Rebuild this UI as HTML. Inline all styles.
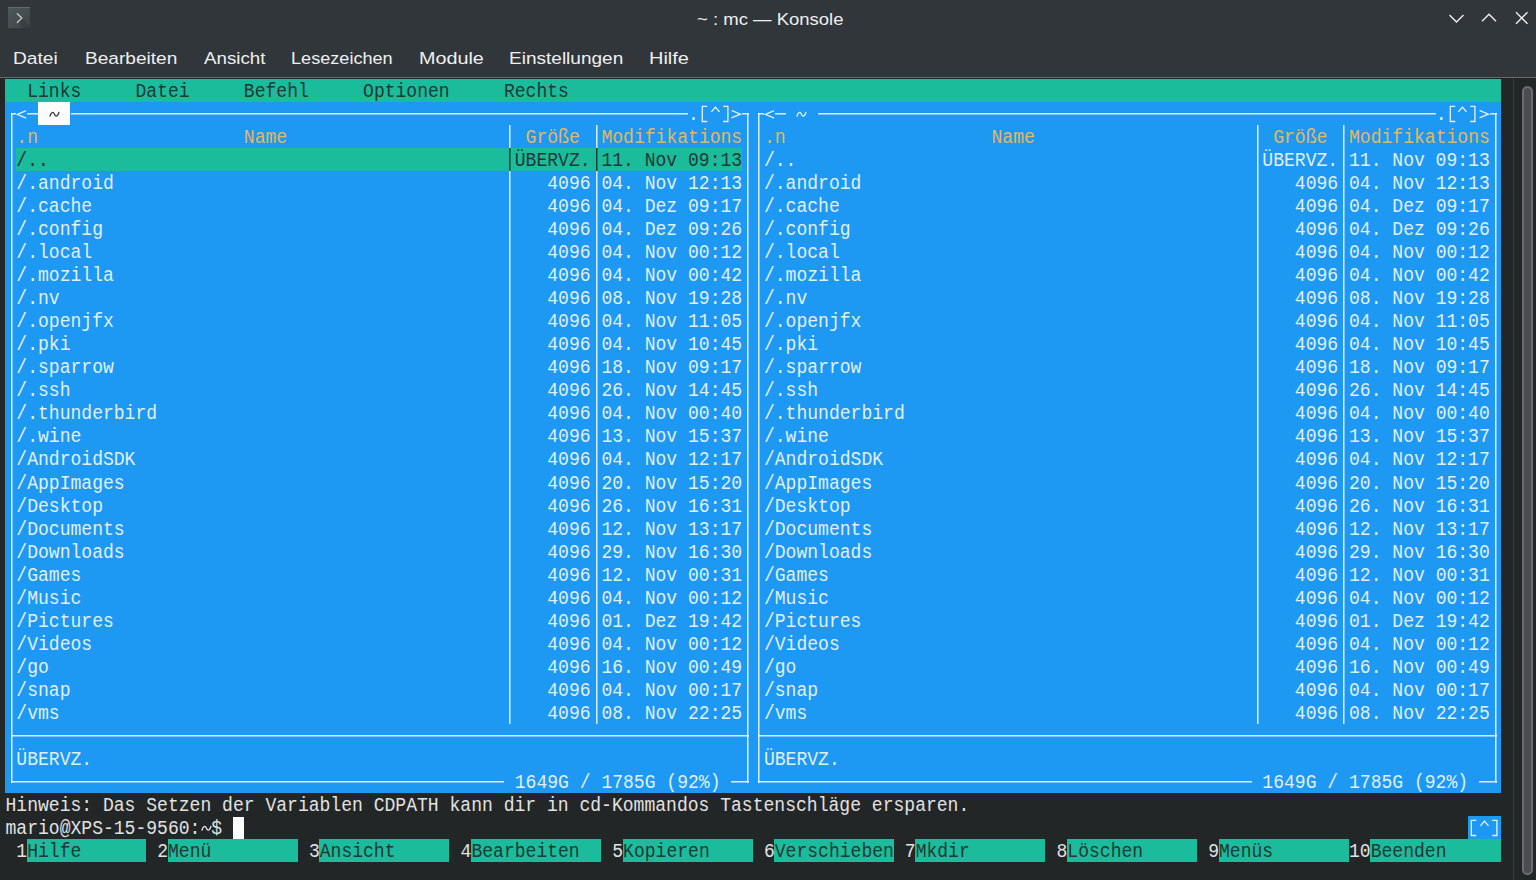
<!DOCTYPE html>
<html><head><meta charset="utf-8"><title>mc — Konsole</title>
<style>
html,body{margin:0;padding:0;width:1536px;height:880px;overflow:hidden;background:#232627;}
.win{position:absolute;left:0;top:0;width:1536px;height:880px;background:#31363b;overflow:hidden}
.title{position:absolute;left:0;top:0;width:1536px;height:38px;background:#31363b}
.ttl{position:absolute;left:696.5px;top:11px;transform:scaleX(1.156);transform-origin:0 0;font:16px "Liberation Sans",sans-serif;color:#eff0f1;white-space:pre}
.menu{position:absolute;top:48.3px;transform-origin:0 16px;font:18px "Liberation Sans",sans-serif;color:#eff0f1;white-space:pre}
.sep{position:absolute;left:0;top:77px;width:1536px;height:1px;background:#66696c}
.term{position:absolute;left:0;top:78px;width:1536px;height:802px;background:#232627}
.b{position:absolute}
.t{position:absolute;font-family:"Liberation Mono",monospace;font-size:18.06px;letter-spacing:-0.001px;line-height:23.03px;height:23.03px;white-space:pre;transform:scaleY(1.08);transform-origin:0 70%;opacity:.88}
.sb{position:absolute;left:1513px;top:78px;width:1px;height:802px;background:#3a3e42}
.handle{position:absolute;left:1522px;top:86px;width:7px;height:785px;border:2px solid #6a6d6f;border-radius:6px;background:#4a4c4e}
</style></head><body>
<div class="win">
<div class="title"></div>
<svg style="position:absolute;left:8px;top:7px" width="23" height="23">
<defs><linearGradient id="ig" x1="0" y1="0" x2="1" y2="1"><stop offset="0" stop-color="#4e5759"/><stop offset="1" stop-color="#3c4346"/></linearGradient></defs>
<rect x="0" y="0" width="22" height="22" fill="url(#ig)"/>
<polygon points="13.8,11.1 9.3,15.5 15.5,22 22,22 22,19.3" fill="rgba(20,24,26,0.16)"/>
<rect x="0" y="0" width="22" height="1" fill="#626a6c"/>
<rect x="0" y="21.5" width="22" height="1" fill="#2a2e31"/>
<path d="M9.3 6.7 L13.8 11.1 L9.3 15.5" stroke="#c9cccd" stroke-width="1.3" fill="none" stroke-linecap="round"/>
</svg>
<div class="ttl">~ : mc — Konsole</div>
<svg style="position:absolute;left:1440px;top:8px" width="96" height="24">
<path d="M9.5 7 L16.5 14 L23.5 7" stroke="#eff0f1" stroke-width="1.4" fill="none"/>
<path d="M42 13.2 L49 6.2 L56 13.2" stroke="#eff0f1" stroke-width="1.4" fill="none"/>
<path d="M76 4.2 L87.5 15.7 M87.5 4.2 L76 15.7" stroke="#eff0f1" stroke-width="1.4" fill="none"/>
</svg>
<div class="menu" style="left:13.27px;transform:scale(1.0641,0.96)">Datei</div>
<div class="menu" style="left:84.88px;transform:scale(1.0595,0.96)">Bearbeiten</div>
<div class="menu" style="left:203.71px;transform:scale(1.0422,0.96)">Ansicht</div>
<div class="menu" style="left:291.39px;transform:scale(1.0061,0.96)">Lesezeichen</div>
<div class="menu" style="left:418.60px;transform:scale(1.0982,0.96)">Module</div>
<div class="menu" style="left:509.29px;transform:scale(1.0571,0.96)">Einstellungen</div>
<div class="menu" style="left:649.08px;transform:scale(1.1091,0.96)">Hilfe</div>
<div class="sep"></div>
<div class="term"></div>
<div class="b" style="left:5px;top:79px;width:1496px;height:23px;background:#1abc9c"></div>
<div class="b" style="left:5px;top:102px;width:33px;height:23px;background:#1d99f3"></div>
<div class="b" style="left:38px;top:102px;width:32px;height:23px;background:#fcfcfc"></div>
<div class="b" style="left:70px;top:102px;width:1431px;height:23px;background:#1d99f3"></div>
<div class="b" style="left:5px;top:125px;width:1496px;height:23px;background:#1d99f3"></div>
<div class="b" style="left:5px;top:148px;width:11px;height:23px;background:#1d99f3"></div>
<div class="b" style="left:16px;top:148px;width:726px;height:23px;background:#1abc9c"></div>
<div class="b" style="left:742px;top:148px;width:759px;height:23px;background:#1d99f3"></div>
<div class="b" style="left:5px;top:171px;width:1496px;height:23px;background:#1d99f3"></div>
<div class="b" style="left:5px;top:194px;width:1496px;height:23px;background:#1d99f3"></div>
<div class="b" style="left:5px;top:217px;width:1496px;height:23px;background:#1d99f3"></div>
<div class="b" style="left:5px;top:240px;width:1496px;height:23px;background:#1d99f3"></div>
<div class="b" style="left:5px;top:263px;width:1496px;height:23px;background:#1d99f3"></div>
<div class="b" style="left:5px;top:286px;width:1496px;height:24px;background:#1d99f3"></div>
<div class="b" style="left:5px;top:310px;width:1496px;height:23px;background:#1d99f3"></div>
<div class="b" style="left:5px;top:333px;width:1496px;height:23px;background:#1d99f3"></div>
<div class="b" style="left:5px;top:356px;width:1496px;height:23px;background:#1d99f3"></div>
<div class="b" style="left:5px;top:379px;width:1496px;height:23px;background:#1d99f3"></div>
<div class="b" style="left:5px;top:402px;width:1496px;height:23px;background:#1d99f3"></div>
<div class="b" style="left:5px;top:425px;width:1496px;height:23px;background:#1d99f3"></div>
<div class="b" style="left:5px;top:448px;width:1496px;height:23px;background:#1d99f3"></div>
<div class="b" style="left:5px;top:471px;width:1496px;height:23px;background:#1d99f3"></div>
<div class="b" style="left:5px;top:494px;width:1496px;height:23px;background:#1d99f3"></div>
<div class="b" style="left:5px;top:517px;width:1496px;height:23px;background:#1d99f3"></div>
<div class="b" style="left:5px;top:540px;width:1496px;height:23px;background:#1d99f3"></div>
<div class="b" style="left:5px;top:563px;width:1496px;height:23px;background:#1d99f3"></div>
<div class="b" style="left:5px;top:586px;width:1496px;height:23px;background:#1d99f3"></div>
<div class="b" style="left:5px;top:609px;width:1496px;height:23px;background:#1d99f3"></div>
<div class="b" style="left:5px;top:632px;width:1496px;height:23px;background:#1d99f3"></div>
<div class="b" style="left:5px;top:655px;width:1496px;height:23px;background:#1d99f3"></div>
<div class="b" style="left:5px;top:678px;width:1496px;height:23px;background:#1d99f3"></div>
<div class="b" style="left:5px;top:701px;width:1496px;height:23px;background:#1d99f3"></div>
<div class="b" style="left:5px;top:724px;width:1496px;height:23px;background:#1d99f3"></div>
<div class="b" style="left:5px;top:747px;width:1496px;height:23px;background:#1d99f3"></div>
<div class="b" style="left:5px;top:770px;width:1496px;height:23px;background:#1d99f3"></div>
<div class="b" style="left:1468px;top:816px;width:33px;height:23px;background:#1d99f3"></div>
<div class="b" style="left:27px;top:839px;width:119px;height:23px;background:#1abc9c"></div>
<div class="b" style="left:168px;top:839px;width:130px;height:23px;background:#1abc9c"></div>
<div class="b" style="left:319px;top:839px;width:130px;height:23px;background:#1abc9c"></div>
<div class="b" style="left:471px;top:839px;width:130px;height:23px;background:#1abc9c"></div>
<div class="b" style="left:623px;top:839px;width:130px;height:23px;background:#1abc9c"></div>
<div class="b" style="left:774px;top:839px;width:120px;height:23px;background:#1abc9c"></div>
<div class="b" style="left:915px;top:839px;width:130px;height:23px;background:#1abc9c"></div>
<div class="b" style="left:1067px;top:839px;width:130px;height:23px;background:#1abc9c"></div>
<div class="b" style="left:1219px;top:839px;width:130px;height:23px;background:#1abc9c"></div>
<div class="b" style="left:1370px;top:839px;width:131px;height:23px;background:#1abc9c"></div>
<span class="t" style="left:27.17px;top:81.00px;color:#232627">Links</span>
<span class="t" style="left:135.52px;top:81.00px;color:#232627">Datei</span>
<span class="t" style="left:243.87px;top:81.00px;color:#232627">Befehl</span>
<span class="t" style="left:363.06px;top:81.00px;color:#232627">Optionen</span>
<span class="t" style="left:503.91px;top:81.00px;color:#232627">Rechts</span>
<svg class="b" style="left:16.34px;top:102.03px" width="11" height="18"><path d="M9.6 8.9 L1.2 12.4 L9.6 15.9" stroke="#fcfcfc" stroke-width="1.3" fill="none" stroke-linecap="round" opacity=".9"/></svg>
<span class="t" style="left:16.34px;top:104.03px;color:#fcfcfc"> </span>
<svg class="b" style="left:48.84px;top:102.03px" width="11" height="18"><path d="M1 14.1 C2.1 9.9 4.2 9.4 5.45 12.3 C6.7 15.2 8.8 14.7 9.9 10.5" stroke="#232627" stroke-width="1.3" fill="none" stroke-linecap="round" opacity=".9"/></svg>
<span class="t" style="left:48.84px;top:104.03px;color:#232627"> </span>
<svg class="b" style="left:698.94px;top:102.03px" width="11" height="23"><path d="M8.2 4.3 H3.3 V19.5 H8.2" stroke="#fcfcfc" stroke-width="1.3" fill="none" opacity=".9"/></svg>
<svg class="b" style="left:709.78px;top:102.03px" width="11" height="14"><path d="M1.4 9.8 L5.45 5.2 L9.5 9.8" stroke="#fcfcfc" stroke-width="1.25" fill="none"/></svg>
<svg class="b" style="left:720.61px;top:102.03px" width="11" height="23"><path d="M2.2 4.3 H6.9 V19.5 H2.2" stroke="#fcfcfc" stroke-width="1.3" fill="none" opacity=".9"/></svg>
<svg class="b" style="left:731.45px;top:102.03px" width="11" height="18"><path d="M1 8.7 L9.4 12.2 L1 15.7" stroke="#fcfcfc" stroke-width="1.3" fill="none" stroke-linecap="round" opacity=".9"/></svg>
<span class="t" style="left:688.11px;top:104.03px;color:#fcfcfc">.    </span>
<svg class="b" style="left:763.95px;top:102.03px" width="11" height="18"><path d="M9.6 8.9 L1.2 12.4 L9.6 15.9" stroke="#fcfcfc" stroke-width="1.3" fill="none" stroke-linecap="round" opacity=".9"/></svg>
<span class="t" style="left:763.95px;top:104.03px;color:#fcfcfc"> </span>
<svg class="b" style="left:796.46px;top:102.03px" width="11" height="18"><path d="M1 14.1 C2.1 9.9 4.2 9.4 5.45 12.3 C6.7 15.2 8.8 14.7 9.9 10.5" stroke="#fcfcfc" stroke-width="1.3" fill="none" stroke-linecap="round" opacity=".9"/></svg>
<span class="t" style="left:796.46px;top:104.03px;color:#fcfcfc"> </span>
<svg class="b" style="left:1446.56px;top:102.03px" width="11" height="23"><path d="M8.2 4.3 H3.3 V19.5 H8.2" stroke="#fcfcfc" stroke-width="1.3" fill="none" opacity=".9"/></svg>
<svg class="b" style="left:1457.39px;top:102.03px" width="11" height="14"><path d="M1.4 9.8 L5.45 5.2 L9.5 9.8" stroke="#fcfcfc" stroke-width="1.25" fill="none"/></svg>
<svg class="b" style="left:1468.23px;top:102.03px" width="11" height="23"><path d="M2.2 4.3 H6.9 V19.5 H2.2" stroke="#fcfcfc" stroke-width="1.3" fill="none" opacity=".9"/></svg>
<svg class="b" style="left:1479.06px;top:102.03px" width="11" height="18"><path d="M1 8.7 L9.4 12.2 L1 15.7" stroke="#fcfcfc" stroke-width="1.3" fill="none" stroke-linecap="round" opacity=".9"/></svg>
<span class="t" style="left:1435.72px;top:104.03px;color:#fcfcfc">.    </span>
<span class="t" style="left:16.34px;top:127.06px;color:#fdbc4b">.n</span>
<span class="t" style="left:243.87px;top:127.06px;color:#fdbc4b">Name</span>
<span class="t" style="left:525.58px;top:127.06px;color:#fdbc4b">Größe</span>
<span class="t" style="left:601.43px;top:127.06px;color:#fdbc4b">Modifikations</span>
<span class="t" style="left:763.95px;top:127.06px;color:#fdbc4b">.n</span>
<span class="t" style="left:991.49px;top:127.06px;color:#fdbc4b">Name</span>
<span class="t" style="left:1273.20px;top:127.06px;color:#fdbc4b">Größe</span>
<span class="t" style="left:1349.04px;top:127.06px;color:#fdbc4b">Modifikations</span>
<span class="t" style="left:16.34px;top:150.09px;color:#232627">/..</span>
<span class="t" style="left:514.75px;top:150.09px;color:#232627">ÜBERVZ. 11. Nov 09:13</span>
<span class="t" style="left:763.95px;top:150.09px;color:#fcfcfc">/..</span>
<span class="t" style="left:1262.36px;top:150.09px;color:#fcfcfc">ÜBERVZ. 11. Nov 09:13</span>
<span class="t" style="left:16.34px;top:173.12px;color:#fcfcfc">/.android</span>
<span class="t" style="left:547.25px;top:173.12px;color:#fcfcfc">4096 04. Nov 12:13</span>
<span class="t" style="left:763.95px;top:173.12px;color:#fcfcfc">/.android</span>
<span class="t" style="left:1294.87px;top:173.12px;color:#fcfcfc">4096 04. Nov 12:13</span>
<span class="t" style="left:16.34px;top:196.15px;color:#fcfcfc">/.cache</span>
<span class="t" style="left:547.25px;top:196.15px;color:#fcfcfc">4096 04. Dez 09:17</span>
<span class="t" style="left:763.95px;top:196.15px;color:#fcfcfc">/.cache</span>
<span class="t" style="left:1294.87px;top:196.15px;color:#fcfcfc">4096 04. Dez 09:17</span>
<span class="t" style="left:16.34px;top:219.18px;color:#fcfcfc">/.config</span>
<span class="t" style="left:547.25px;top:219.18px;color:#fcfcfc">4096 04. Dez 09:26</span>
<span class="t" style="left:763.95px;top:219.18px;color:#fcfcfc">/.config</span>
<span class="t" style="left:1294.87px;top:219.18px;color:#fcfcfc">4096 04. Dez 09:26</span>
<span class="t" style="left:16.34px;top:242.21px;color:#fcfcfc">/.local</span>
<span class="t" style="left:547.25px;top:242.21px;color:#fcfcfc">4096 04. Nov 00:12</span>
<span class="t" style="left:763.95px;top:242.21px;color:#fcfcfc">/.local</span>
<span class="t" style="left:1294.87px;top:242.21px;color:#fcfcfc">4096 04. Nov 00:12</span>
<span class="t" style="left:16.34px;top:265.24px;color:#fcfcfc">/.mozilla</span>
<span class="t" style="left:547.25px;top:265.24px;color:#fcfcfc">4096 04. Nov 00:42</span>
<span class="t" style="left:763.95px;top:265.24px;color:#fcfcfc">/.mozilla</span>
<span class="t" style="left:1294.87px;top:265.24px;color:#fcfcfc">4096 04. Nov 00:42</span>
<span class="t" style="left:16.34px;top:288.27px;color:#fcfcfc">/.nv</span>
<span class="t" style="left:547.25px;top:288.27px;color:#fcfcfc">4096 08. Nov 19:28</span>
<span class="t" style="left:763.95px;top:288.27px;color:#fcfcfc">/.nv</span>
<span class="t" style="left:1294.87px;top:288.27px;color:#fcfcfc">4096 08. Nov 19:28</span>
<span class="t" style="left:16.34px;top:311.30px;color:#fcfcfc">/.openjfx</span>
<span class="t" style="left:547.25px;top:311.30px;color:#fcfcfc">4096 04. Nov 11:05</span>
<span class="t" style="left:763.95px;top:311.30px;color:#fcfcfc">/.openjfx</span>
<span class="t" style="left:1294.87px;top:311.30px;color:#fcfcfc">4096 04. Nov 11:05</span>
<span class="t" style="left:16.34px;top:334.33px;color:#fcfcfc">/.pki</span>
<span class="t" style="left:547.25px;top:334.33px;color:#fcfcfc">4096 04. Nov 10:45</span>
<span class="t" style="left:763.95px;top:334.33px;color:#fcfcfc">/.pki</span>
<span class="t" style="left:1294.87px;top:334.33px;color:#fcfcfc">4096 04. Nov 10:45</span>
<span class="t" style="left:16.34px;top:357.36px;color:#fcfcfc">/.sparrow</span>
<span class="t" style="left:547.25px;top:357.36px;color:#fcfcfc">4096 18. Nov 09:17</span>
<span class="t" style="left:763.95px;top:357.36px;color:#fcfcfc">/.sparrow</span>
<span class="t" style="left:1294.87px;top:357.36px;color:#fcfcfc">4096 18. Nov 09:17</span>
<span class="t" style="left:16.34px;top:380.39px;color:#fcfcfc">/.ssh</span>
<span class="t" style="left:547.25px;top:380.39px;color:#fcfcfc">4096 26. Nov 14:45</span>
<span class="t" style="left:763.95px;top:380.39px;color:#fcfcfc">/.ssh</span>
<span class="t" style="left:1294.87px;top:380.39px;color:#fcfcfc">4096 26. Nov 14:45</span>
<span class="t" style="left:16.34px;top:403.42px;color:#fcfcfc">/.thunderbird</span>
<span class="t" style="left:547.25px;top:403.42px;color:#fcfcfc">4096 04. Nov 00:40</span>
<span class="t" style="left:763.95px;top:403.42px;color:#fcfcfc">/.thunderbird</span>
<span class="t" style="left:1294.87px;top:403.42px;color:#fcfcfc">4096 04. Nov 00:40</span>
<span class="t" style="left:16.34px;top:426.45px;color:#fcfcfc">/.wine</span>
<span class="t" style="left:547.25px;top:426.45px;color:#fcfcfc">4096 13. Nov 15:37</span>
<span class="t" style="left:763.95px;top:426.45px;color:#fcfcfc">/.wine</span>
<span class="t" style="left:1294.87px;top:426.45px;color:#fcfcfc">4096 13. Nov 15:37</span>
<span class="t" style="left:16.34px;top:449.48px;color:#fcfcfc">/AndroidSDK</span>
<span class="t" style="left:547.25px;top:449.48px;color:#fcfcfc">4096 04. Nov 12:17</span>
<span class="t" style="left:763.95px;top:449.48px;color:#fcfcfc">/AndroidSDK</span>
<span class="t" style="left:1294.87px;top:449.48px;color:#fcfcfc">4096 04. Nov 12:17</span>
<span class="t" style="left:16.34px;top:472.51px;color:#fcfcfc">/AppImages</span>
<span class="t" style="left:547.25px;top:472.51px;color:#fcfcfc">4096 20. Nov 15:20</span>
<span class="t" style="left:763.95px;top:472.51px;color:#fcfcfc">/AppImages</span>
<span class="t" style="left:1294.87px;top:472.51px;color:#fcfcfc">4096 20. Nov 15:20</span>
<span class="t" style="left:16.34px;top:495.54px;color:#fcfcfc">/Desktop</span>
<span class="t" style="left:547.25px;top:495.54px;color:#fcfcfc">4096 26. Nov 16:31</span>
<span class="t" style="left:763.95px;top:495.54px;color:#fcfcfc">/Desktop</span>
<span class="t" style="left:1294.87px;top:495.54px;color:#fcfcfc">4096 26. Nov 16:31</span>
<span class="t" style="left:16.34px;top:518.57px;color:#fcfcfc">/Documents</span>
<span class="t" style="left:547.25px;top:518.57px;color:#fcfcfc">4096 12. Nov 13:17</span>
<span class="t" style="left:763.95px;top:518.57px;color:#fcfcfc">/Documents</span>
<span class="t" style="left:1294.87px;top:518.57px;color:#fcfcfc">4096 12. Nov 13:17</span>
<span class="t" style="left:16.34px;top:541.60px;color:#fcfcfc">/Downloads</span>
<span class="t" style="left:547.25px;top:541.60px;color:#fcfcfc">4096 29. Nov 16:30</span>
<span class="t" style="left:763.95px;top:541.60px;color:#fcfcfc">/Downloads</span>
<span class="t" style="left:1294.87px;top:541.60px;color:#fcfcfc">4096 29. Nov 16:30</span>
<span class="t" style="left:16.34px;top:564.63px;color:#fcfcfc">/Games</span>
<span class="t" style="left:547.25px;top:564.63px;color:#fcfcfc">4096 12. Nov 00:31</span>
<span class="t" style="left:763.95px;top:564.63px;color:#fcfcfc">/Games</span>
<span class="t" style="left:1294.87px;top:564.63px;color:#fcfcfc">4096 12. Nov 00:31</span>
<span class="t" style="left:16.34px;top:587.66px;color:#fcfcfc">/Music</span>
<span class="t" style="left:547.25px;top:587.66px;color:#fcfcfc">4096 04. Nov 00:12</span>
<span class="t" style="left:763.95px;top:587.66px;color:#fcfcfc">/Music</span>
<span class="t" style="left:1294.87px;top:587.66px;color:#fcfcfc">4096 04. Nov 00:12</span>
<span class="t" style="left:16.34px;top:610.69px;color:#fcfcfc">/Pictures</span>
<span class="t" style="left:547.25px;top:610.69px;color:#fcfcfc">4096 01. Dez 19:42</span>
<span class="t" style="left:763.95px;top:610.69px;color:#fcfcfc">/Pictures</span>
<span class="t" style="left:1294.87px;top:610.69px;color:#fcfcfc">4096 01. Dez 19:42</span>
<span class="t" style="left:16.34px;top:633.72px;color:#fcfcfc">/Videos</span>
<span class="t" style="left:547.25px;top:633.72px;color:#fcfcfc">4096 04. Nov 00:12</span>
<span class="t" style="left:763.95px;top:633.72px;color:#fcfcfc">/Videos</span>
<span class="t" style="left:1294.87px;top:633.72px;color:#fcfcfc">4096 04. Nov 00:12</span>
<span class="t" style="left:16.34px;top:656.75px;color:#fcfcfc">/go</span>
<span class="t" style="left:547.25px;top:656.75px;color:#fcfcfc">4096 16. Nov 00:49</span>
<span class="t" style="left:763.95px;top:656.75px;color:#fcfcfc">/go</span>
<span class="t" style="left:1294.87px;top:656.75px;color:#fcfcfc">4096 16. Nov 00:49</span>
<span class="t" style="left:16.34px;top:679.78px;color:#fcfcfc">/snap</span>
<span class="t" style="left:547.25px;top:679.78px;color:#fcfcfc">4096 04. Nov 00:17</span>
<span class="t" style="left:763.95px;top:679.78px;color:#fcfcfc">/snap</span>
<span class="t" style="left:1294.87px;top:679.78px;color:#fcfcfc">4096 04. Nov 00:17</span>
<span class="t" style="left:16.34px;top:702.81px;color:#fcfcfc">/vms</span>
<span class="t" style="left:547.25px;top:702.81px;color:#fcfcfc">4096 08. Nov 22:25</span>
<span class="t" style="left:763.95px;top:702.81px;color:#fcfcfc">/vms</span>
<span class="t" style="left:1294.87px;top:702.81px;color:#fcfcfc">4096 08. Nov 22:25</span>
<span class="t" style="left:16.34px;top:748.87px;color:#fcfcfc">ÜBERVZ.</span>
<span class="t" style="left:763.95px;top:748.87px;color:#fcfcfc">ÜBERVZ.</span>
<span class="t" style="left:514.75px;top:771.90px;color:#fcfcfc">1649G / 1785G (92%)</span>
<span class="t" style="left:1262.36px;top:771.90px;color:#fcfcfc">1649G / 1785G (92%)</span>
<span class="t" style="left:5.50px;top:794.93px;color:#fcfcfc">Hinweis: Das Setzen der Variablen CDPATH kann dir in cd-Kommandos Tastenschläge ersparen.</span>
<svg class="b" style="left:200.53px;top:815.96px" width="11" height="18"><path d="M1 14.1 C2.1 9.9 4.2 9.4 5.45 12.3 C6.7 15.2 8.8 14.7 9.9 10.5" stroke="#fcfcfc" stroke-width="1.3" fill="none" stroke-linecap="round" opacity=".9"/></svg>
<span class="t" style="left:5.50px;top:817.96px;color:#fcfcfc">mario@XPS-15-9560: $</span>
<svg class="b" style="left:1468.23px;top:815.96px" width="11" height="23"><path d="M8.2 4.3 H3.3 V19.5 H8.2" stroke="#fcfcfc" stroke-width="1.3" fill="none" opacity=".9"/></svg>
<svg class="b" style="left:1479.06px;top:815.96px" width="11" height="14"><path d="M1.4 9.8 L5.45 5.2 L9.5 9.8" stroke="#fcfcfc" stroke-width="1.25" fill="none"/></svg>
<svg class="b" style="left:1489.90px;top:815.96px" width="11" height="23"><path d="M2.2 4.3 H6.9 V19.5 H2.2" stroke="#fcfcfc" stroke-width="1.3" fill="none" opacity=".9"/></svg>
<span class="t" style="left:1468.23px;top:817.96px;color:#fcfcfc">   </span>
<span class="t" style="left:16.34px;top:840.99px;color:#fcfcfc">1</span>
<span class="t" style="left:27.17px;top:840.99px;color:#232627">Hilfe</span>
<span class="t" style="left:157.19px;top:840.99px;color:#fcfcfc">2</span>
<span class="t" style="left:168.03px;top:840.99px;color:#232627">Menü</span>
<span class="t" style="left:308.88px;top:840.99px;color:#fcfcfc">3</span>
<span class="t" style="left:319.72px;top:840.99px;color:#232627">Ansicht</span>
<span class="t" style="left:460.57px;top:840.99px;color:#fcfcfc">4</span>
<span class="t" style="left:471.41px;top:840.99px;color:#232627">Bearbeiten</span>
<span class="t" style="left:612.26px;top:840.99px;color:#fcfcfc">5</span>
<span class="t" style="left:623.10px;top:840.99px;color:#232627">Kopieren</span>
<span class="t" style="left:763.95px;top:840.99px;color:#fcfcfc">6</span>
<span class="t" style="left:774.79px;top:840.99px;color:#232627">Verschieben</span>
<span class="t" style="left:904.81px;top:840.99px;color:#fcfcfc">7</span>
<span class="t" style="left:915.64px;top:840.99px;color:#232627">Mkdir</span>
<span class="t" style="left:1056.50px;top:840.99px;color:#fcfcfc">8</span>
<span class="t" style="left:1067.33px;top:840.99px;color:#232627">Löschen</span>
<span class="t" style="left:1208.19px;top:840.99px;color:#fcfcfc">9</span>
<span class="t" style="left:1219.02px;top:840.99px;color:#232627">Menüs</span>
<span class="t" style="left:1349.04px;top:840.99px;color:#fcfcfc">10</span>
<span class="t" style="left:1370.71px;top:840.99px;color:#232627">Beenden</span>
<div class="b" style="left:11px;top:113px;width:5px;height:2px;background:linear-gradient(rgba(252,252,252,0.82) 50%,rgba(252,252,252,0.45) 50%)"></div>
<div class="b" style="left:27px;top:113px;width:11px;height:2px;background:linear-gradient(rgba(252,252,252,0.82) 50%,rgba(252,252,252,0.45) 50%)"></div>
<div class="b" style="left:71px;top:113px;width:617px;height:2px;background:linear-gradient(rgba(252,252,252,0.82) 50%,rgba(252,252,252,0.45) 50%)"></div>
<div class="b" style="left:742px;top:113px;width:7px;height:2px;background:linear-gradient(rgba(252,252,252,0.82) 50%,rgba(252,252,252,0.45) 50%)"></div>
<div class="b" style="left:758px;top:113px;width:6px;height:2px;background:linear-gradient(rgba(252,252,252,0.82) 50%,rgba(252,252,252,0.45) 50%)"></div>
<div class="b" style="left:775px;top:113px;width:11px;height:2px;background:linear-gradient(rgba(252,252,252,0.82) 50%,rgba(252,252,252,0.45) 50%)"></div>
<div class="b" style="left:818px;top:113px;width:618px;height:2px;background:linear-gradient(rgba(252,252,252,0.82) 50%,rgba(252,252,252,0.45) 50%)"></div>
<div class="b" style="left:1490px;top:113px;width:7px;height:2px;background:linear-gradient(rgba(252,252,252,0.82) 50%,rgba(252,252,252,0.45) 50%)"></div>
<div class="b" style="left:11px;top:735px;width:738px;height:2px;background:linear-gradient(rgba(252,252,252,0.82) 50%,rgba(252,252,252,0.45) 50%)"></div>
<div class="b" style="left:758px;top:735px;width:739px;height:2px;background:linear-gradient(rgba(252,252,252,0.82) 50%,rgba(252,252,252,0.45) 50%)"></div>
<div class="b" style="left:11px;top:781px;width:493px;height:2px;background:linear-gradient(rgba(252,252,252,0.82) 50%,rgba(252,252,252,0.45) 50%)"></div>
<div class="b" style="left:731px;top:781px;width:18px;height:2px;background:linear-gradient(rgba(252,252,252,0.82) 50%,rgba(252,252,252,0.45) 50%)"></div>
<div class="b" style="left:758px;top:781px;width:494px;height:2px;background:linear-gradient(rgba(252,252,252,0.82) 50%,rgba(252,252,252,0.45) 50%)"></div>
<div class="b" style="left:1479px;top:781px;width:18px;height:2px;background:linear-gradient(rgba(252,252,252,0.82) 50%,rgba(252,252,252,0.45) 50%)"></div>
<div class="b" style="left:11px;top:113px;width:2px;height:670px;background:linear-gradient(90deg,rgba(252,252,252,0.82) 50%,rgba(252,252,252,0.45) 50%)"></div>
<div class="b" style="left:747px;top:113px;width:2px;height:670px;background:linear-gradient(90deg,rgba(252,252,252,0.82) 50%,rgba(252,252,252,0.45) 50%)"></div>
<div class="b" style="left:509px;top:125px;width:2px;height:23px;background:linear-gradient(90deg,rgba(252,252,252,0.82) 50%,rgba(252,252,252,0.45) 50%)"></div>
<div class="b" style="left:509px;top:171px;width:2px;height:553px;background:linear-gradient(90deg,rgba(252,252,252,0.82) 50%,rgba(252,252,252,0.45) 50%)"></div>
<div class="b" style="left:596px;top:125px;width:2px;height:23px;background:linear-gradient(90deg,rgba(252,252,252,0.82) 50%,rgba(252,252,252,0.45) 50%)"></div>
<div class="b" style="left:596px;top:171px;width:2px;height:553px;background:linear-gradient(90deg,rgba(252,252,252,0.82) 50%,rgba(252,252,252,0.45) 50%)"></div>
<div class="b" style="left:509px;top:148px;width:2px;height:23px;background:linear-gradient(90deg,rgba(35,38,39,0.82) 50%,rgba(35,38,39,0.45) 50%)"></div>
<div class="b" style="left:596px;top:148px;width:2px;height:23px;background:linear-gradient(90deg,rgba(35,38,39,0.82) 50%,rgba(35,38,39,0.45) 50%)"></div>
<div class="b" style="left:758px;top:113px;width:2px;height:670px;background:linear-gradient(90deg,rgba(252,252,252,0.82) 50%,rgba(252,252,252,0.45) 50%)"></div>
<div class="b" style="left:1495px;top:113px;width:2px;height:670px;background:linear-gradient(90deg,rgba(252,252,252,0.82) 50%,rgba(252,252,252,0.45) 50%)"></div>
<div class="b" style="left:1257px;top:125px;width:2px;height:599px;background:linear-gradient(90deg,rgba(252,252,252,0.82) 50%,rgba(252,252,252,0.45) 50%)"></div>
<div class="b" style="left:1343px;top:125px;width:2px;height:599px;background:linear-gradient(90deg,rgba(252,252,252,0.82) 50%,rgba(252,252,252,0.45) 50%)"></div>
<div class="b" style="left:233px;top:817px;width:11px;height:22px;background:#fcfcfc"></div>
<div class="sb"></div>
<div class="handle"></div>
</div>
</body></html>
